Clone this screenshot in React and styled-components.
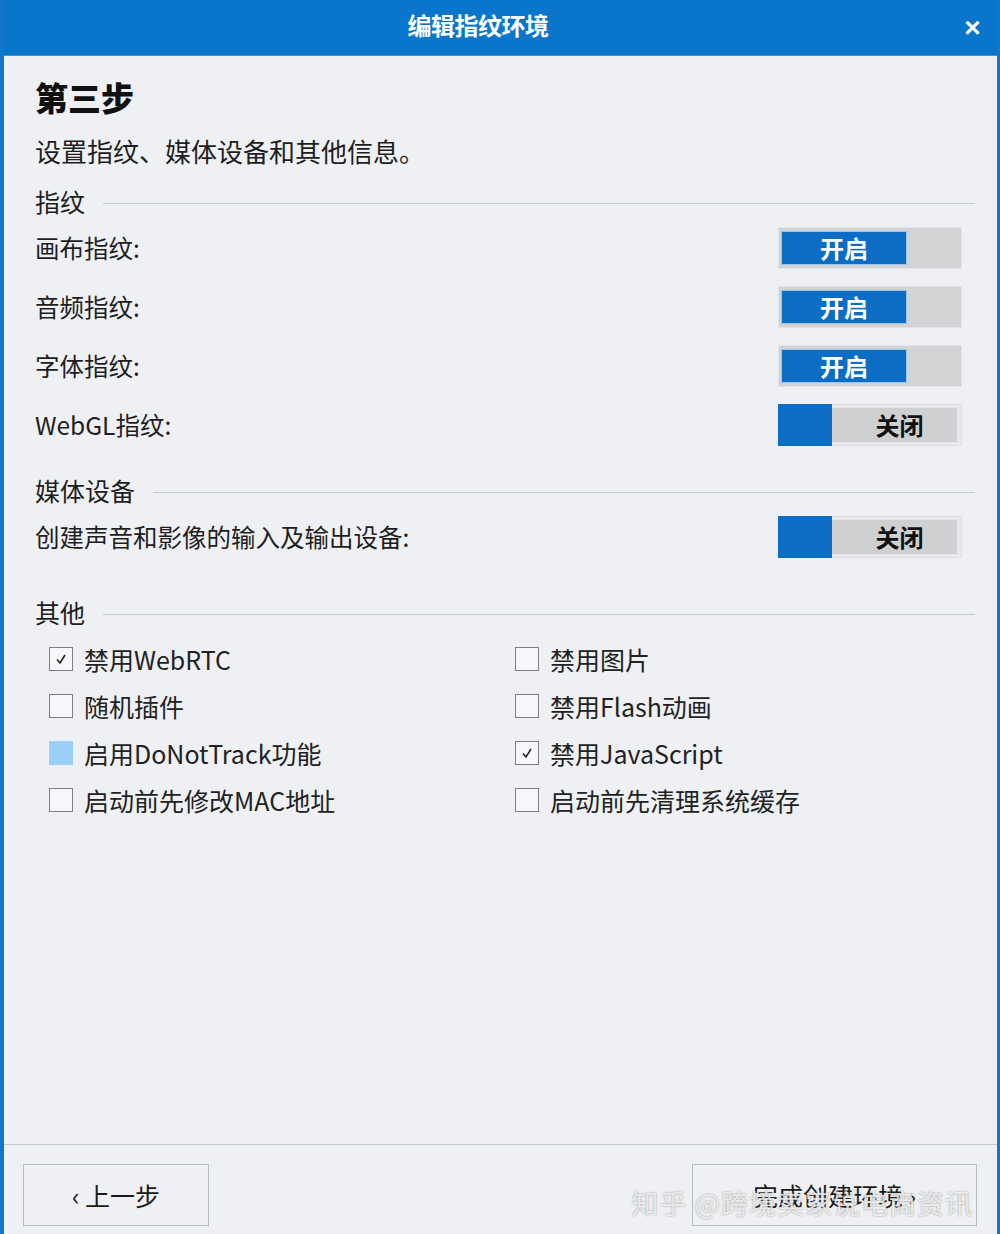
import React from 'react';
import styled, { createGlobalStyle, css } from 'styled-components';

const GlobalStyle = createGlobalStyle`
  html, body {
    margin: 0;
    padding: 0;
    background: #eef0f4;
  }
  body {
    font-family: "Noto Sans CJK SC", "Noto Sans", sans-serif;
    color: #1e1e1e;
  }
`;

const Window = styled.div`
  width: 1000px;
  height: 1234px;
  box-sizing: border-box;
  display: flex;
  flex-direction: column;
  background: #eef0f4;
  border-left: 4px solid #1277c9;
  border-right: 3px solid #1277c9;
  overflow: hidden;
`;

const TitleBar = styled.div`
  height: 56px;
  flex: none;
  margin: 0 -3px 0 -4px;
  padding: 0 44px 6px 0;
  background: #0a76cb;
  border-bottom: 1px solid #3d93d8;
  box-sizing: border-box;
  display: flex;
  align-items: center;
  justify-content: center;
  position: relative;
  color: #fff;
  font-size: 24px;
  font-weight: 700;
  letter-spacing: -0.5px;
`;

const Close = styled.span`
  position: absolute;
  right: 20px;
  top: 12px;
  font-family: "Liberation Sans", sans-serif;
  font-size: 28px;
  font-weight: 700;
  color: #fff;
`;

const Body = styled.div`
  flex: 1;
  padding: 20px 22px 0 31px;
  display: flex;
  flex-direction: column;
`;

const Heading = styled.h1`
  margin: 0;
  font-size: 33px;
  line-height: 42px;
  font-weight: 900;
  color: #111;
`;

const Subtitle = styled.div`
  margin-top: 17px;
  font-size: 26px;
  line-height: 32px;
`;

const Section = styled.div`
  margin-top: ${p => p.$gap}px;
  display: flex;
  align-items: center;
  gap: 18px;
  font-size: 25px;
  line-height: 32px;
  &::after {
    content: '';
    flex: 1;
    height: 1px;
    margin-top: 4px;
    background: #c3c7cd;
  }
`;

const Row = styled.div`
  height: 59px;
  display: flex;
  align-items: center;
  justify-content: space-between;
  font-size: 24.5px;
  padding-right: 13px;
  &:first-of-type {
    margin-top: 1px;
  }
`;

const Track = styled.div`
  width: 184px;
  height: 42px;
  box-sizing: border-box;
  display: flex;
  background: #d2d3d5;
  border: 1px solid #e2e4e8;
  font-size: 24px;
  font-weight: 700;
  ${p => p.$on
    ? css`padding: 3px 54px 3px 2px;`
    : css`padding: 0; background: #e6e8eb; border-color: #dcdee2;`}
`;

const OnPart = styled.div`
  flex: 1;
  background: #0b6ec4;
  border: 1px solid #9cc4e8;
  color: #fff;
  display: flex;
  align-items: center;
  justify-content: center;
`;

const Knob = styled.div`
  width: 54px;
  background: #0b6ec4;
  margin: -1px 0 -1px -1px;
`;

const OffPart = styled.div`
  flex: 1;
  margin: 3px 4px 3px 0;
  background: #cfd0d2;
  color: #111;
  display: flex;
  align-items: center;
  justify-content: center;
  padding-left: 10px;
`;

function Toggle({ on }) {
  return (
    <Track $on={on}>
      {on ? <OnPart>开启</OnPart> : <><Knob /><OffPart>关闭</OffPart></>}
    </Track>
  );
}

const CheckGrid = styled.div`
  margin-top: 7px;
  padding-left: 14px;
  display: grid;
  grid-template-columns: 466px 1fr;
  grid-auto-rows: 47px;
`;

const CheckItem = styled.label`
  display: flex;
  align-items: center;
  gap: 11px;
  font-size: 25px;
  color: #222;
`;

const Box = styled.span`
  width: 24px;
  height: 24px;
  box-sizing: border-box;
  border: 1px solid #7d7f83;
  background: #f6f7f9;
  display: flex;
  align-items: center;
  justify-content: center;
  ${p => p.$focus && css`
    background: #9ccff5;
    border-color: #9ccff5;
  `}
`;

function Check({ checked, focus, children }) {
  return (
    <CheckItem>
      <Box $focus={focus}>
        {checked && (
          <svg width="14" height="14" viewBox="0 0 14 14">
            <path d="M3 7.5 L6 11 L11 3" fill="none" stroke="#222" strokeWidth="1.6" />
          </svg>
        )}
      </Box>
      {children}
    </CheckItem>
  );
}

const Footer = styled.div`
  flex: none;
  height: 90px;
  box-sizing: border-box;
  border-top: 1px solid #c6cad0;
  padding: 19px 20px 0 19px;
  display: flex;
  justify-content: space-between;
  align-items: flex-start;
  position: relative;
`;

const Button = styled.button`
  width: ${p => p.$w}px;
  height: 62px;
  background: #eef0f3;
  border: 1px solid #b9bcc1;
  font-family: "Noto Sans CJK SC", sans-serif;
  font-size: 25px;
  color: #1a1a1a;
  display: flex;
  align-items: center;
  justify-content: center;
  gap: 8px;
`;

const Watermark = styled.div`
  position: absolute;
  right: 24px;
  top: 38px;
  font-size: 27px;
  color: rgba(255, 255, 255, 0.75);
  text-shadow: 0 0 2px rgba(120, 120, 120, 0.8);
  letter-spacing: 1px;
  white-space: nowrap;
`;

export default function App() {
  return (
    <>
      <GlobalStyle />
      <Window>
        <TitleBar>
          编辑指纹环境
          <Close>×</Close>
        </TitleBar>
        <Body>
          <Heading>第三步</Heading>
          <Subtitle>设置指纹、媒体设备和其他信息。</Subtitle>

          <Section $gap={18}>指纹</Section>
          <div>
            <Row>画布指纹:<Toggle on /></Row>
            <Row>音频指纹:<Toggle on /></Row>
            <Row>字体指纹:<Toggle on /></Row>
            <Row>WebGL指纹:<Toggle on={false} /></Row>
          </div>

          <Section $gap={20}>媒体设备</Section>
          <div>
            <Row>创建声音和影像的输入及输出设备:<Toggle on={false} /></Row>
          </div>

          <Section $gap={30}>其他</Section>
          <CheckGrid>
            <Check checked>禁用WebRTC</Check>
            <Check>禁用图片</Check>
            <Check>随机插件</Check>
            <Check>禁用Flash动画</Check>
            <Check focus>启用DoNotTrack功能</Check>
            <Check checked>禁用JavaScript</Check>
            <Check>启动前先修改MAC地址</Check>
            <Check>启动前先清理系统缓存</Check>
          </CheckGrid>
        </Body>
        <Footer>
          <Button $w={186}>‹ 上一步</Button>
          <Button $w={285}>完成创建环境 ›</Button>
          <Watermark>知乎 @跨境卖家说电商资讯</Watermark>
        </Footer>
      </Window>
    </>
  );
}
